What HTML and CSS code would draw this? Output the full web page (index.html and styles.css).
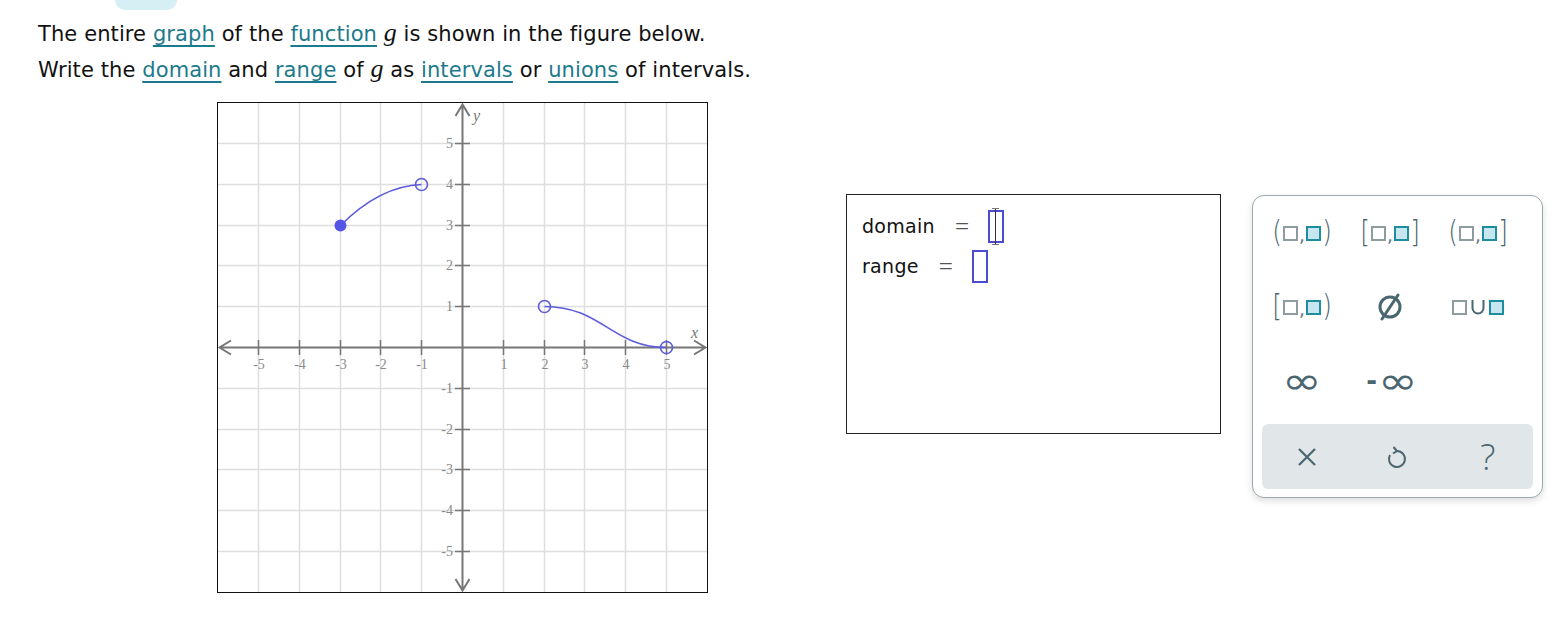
FILE: index.html
```html
<!DOCTYPE html>
<html>
<head>
<meta charset="utf-8">
<title>Domain and range</title>
<link rel="stylesheet" href="styles.css">
</head>
<body>
<div class="tab"></div>
<div class="prompt">
  <p>The entire <a>graph</a> of the <a>function</a> <i class="var">g</i> is shown in the figure below.</p>
  <p>Write the <a>domain</a> and <a>range</a> of <i class="var">g</i> as <a>intervals</a> or <a>unions</a> of intervals.</p>
</div>
<div class="work">
  <div class="graph">
    <svg width="491" height="491" viewBox="0 0 491 491">
      <rect x="0.5" y="0.5" width="490" height="490" fill="#fff" stroke="#111" stroke-width="1"/>
      <path class="grid" d="M41.5 1V490M82.5 1V490M123.5 1V490M163.5 1V490M204.5 1V490M286.5 1V490M327.5 1V490M367.5 1V490M408.5 1V490M449.5 1V490M1 41.5H490M1 82.5H490M1 123.5H490M1 163.5H490M1 204.5H490M1 286.5H490M1 327.5H490M1 367.5H490M1 408.5H490M1 449.5H490"/>
      <path class="axis" d="M2 245.5H489M245.5 2V489M14 238.5L2.5 245.5L14 252.5M477 238.5L488.5 245.5L477 252.5M238.5 14L245.5 2.5L252.5 14M238.5 477L245.5 488.5L252.5 477"/>
      <path class="tick" d="M41.5 238V253M82.5 238V253M123.5 238V253M163.5 238V253M204.5 238V253M286.5 238V253M327.5 238V253M367.5 238V253M408.5 238V253M449.5 238V253M238 41.5H253M238 82.5H253M238 123.5H253M238 163.5H253M238 204.5H253M238 286.5H253M238 327.5H253M238 367.5H253M238 408.5H253M238 449.5H253"/>
      <g class="xl">
        <text x="42" y="267">-5</text><text x="83" y="267">-4</text><text x="124" y="267">-3</text><text x="164" y="267">-2</text><text x="205" y="267">-1</text>
        <text x="287" y="267">1</text><text x="328" y="267">2</text><text x="368" y="267">3</text><text x="409" y="267">4</text><text x="450" y="267">5</text>
      </g>
      <g class="yl">
        <text x="236" y="46">5</text><text x="236" y="87">4</text><text x="236" y="128">3</text><text x="236" y="168">2</text><text x="236" y="209">1</text>
        <text x="236" y="291">-1</text><text x="236" y="332">-2</text><text x="236" y="372">-3</text><text x="236" y="413">-4</text><text x="236" y="454">-5</text>
      </g>
      <text class="al" x="474" y="236">x</text>
      <text class="al" x="256" y="19">y</text>
      <path class="curve" d="M123.5 123.5Q163 84 204.5 82.5"/>
      <path class="curve" d="M327.5 204.5C385 204.5 395 245.5 449.5 245.5"/>
      <circle cx="123.5" cy="123.5" r="6" class="dot"/>
      <circle cx="204.5" cy="82.5" r="6" class="open"/>
      <circle cx="327.5" cy="204.5" r="6" class="open"/>
      <circle cx="449.5" cy="245.5" r="6" class="open"/>
    </svg>
  </div>

  <div class="answer">
    <div class="row"><span class="lbl">domain</span><span class="eq">=</span><span class="slot"><span class="caret"></span></span></div>
    <div class="row"><span class="lbl">range</span><span class="eq">=</span><span class="slot"></span></div>
  </div>

  <div class="keypad">
    <div class="keys">
      <div class="key"><span class="p">(</span><span class="b"></span><span class="c">,</span><span class="b t"></span><span class="p">)</span></div>
      <div class="key"><span class="p">[</span><span class="b"></span><span class="c">,</span><span class="b t"></span><span class="p">]</span></div>
      <div class="key"><span class="p">(</span><span class="b"></span><span class="c">,</span><span class="b t"></span><span class="p">]</span></div>
      <div class="key"><span class="p">[</span><span class="b"></span><span class="c">,</span><span class="b t"></span><span class="p">)</span></div>
      <div class="key">
        <svg width="30" height="32" viewBox="0 0 30 32"><circle cx="15" cy="16" r="10" fill="none" stroke="#4a6670" stroke-width="3"/><path d="M7 28L23 4" stroke="#4a6670" stroke-width="3" stroke-linecap="round"/></svg>
      </div>
      <div class="key"><span class="b sm"></span><svg class="cup" width="16" height="16" viewBox="0 0 16 16"><path d="M2.5 1V9A5.5 5.5 0 0 0 13.5 9V1" fill="none" stroke="#4a6670" stroke-width="2"/></svg><span class="b t sm"></span></div>
      <div class="key"><span class="inf">∞</span></div>
      <div class="key"><span class="minus">-</span><span class="inf">∞</span></div>
    </div>
    <div class="tools">
      <div class="tool">
        <svg width="22" height="22" viewBox="0 0 22 22"><path d="M3 3L19 19M19 3L3 19" stroke="#4a6670" stroke-width="2.2"/></svg>
      </div>
      <div class="tool">
        <svg width="26" height="28" viewBox="0 0 26 28"><path d="M13 8A8 8 0 1 1 6 12" fill="none" stroke="#4a6670" stroke-width="2"/><path d="M9.5 4L13 8L9 10.5" fill="none" stroke="#4a6670" stroke-width="2"/></svg>
      </div>
      <div class="tool"><span class="q">?</span></div>
    </div>
  </div>
</div>
</body>
</html>
```
FILE: styles.css
```css
* { box-sizing: border-box; }
html, body { margin: 0; padding: 0; background: #fff; }
body {
  font-family: "DejaVu Sans", Verdana, sans-serif;
  color: #111;
  width: 1564px;
  height: 642px;
  overflow: hidden;
}
.tab {
  width: 62px;
  height: 10px;
  margin-left: 115px;
  background: #d6eff5;
  border-radius: 0 0 10px 10px;
}
.prompt {
  margin: 6px 0 0 38px;
  font-size: 21px;
  letter-spacing: 0.1px;
}
.prompt p { margin: 0; line-height: 36px; height: 36px; }
.prompt a {
  color: #1d7a8c;
  text-decoration: underline;
  text-underline-offset: 4px;
  text-decoration-thickness: 1.5px;
}
.var {
  font-family: "Liberation Serif", "Times New Roman", serif;
  font-size: 26px;
  line-height: 1;
  letter-spacing: 0;
}
.work {
  display: flex;
  align-items: flex-start;
  margin-top: 14px;
}
.graph { margin-left: 217px; width: 491px; height: 491px; }
.graph svg { display: block; }
.grid { fill: none; stroke: #dedede; stroke-width: 1.5; }
.axis { fill: none; stroke: #777; stroke-width: 2; }
.tick { fill: none; stroke: #777; stroke-width: 1.5; }
.xl text { font-family: "Liberation Serif", serif; font-size: 14px; fill: #8a8a8a; text-anchor: middle; }
.yl text { font-family: "Liberation Serif", serif; font-size: 14px; fill: #8a8a8a; text-anchor: end; }
.al { font-family: "Liberation Serif", serif; font-style: italic; font-size: 16px; fill: #777; }
.curve { fill: none; stroke: #5c5cdc; stroke-width: 1.6; }
.dot { fill: #5656e6; }
.open { fill: none; stroke: #5c5cdc; stroke-width: 1.6; }

.answer {
  margin-left: 138px;
  margin-top: 92px;
  width: 375px;
  height: 240px;
  border: 1px solid #222;
  padding: 11px 0 0 15px;
}
.row {
  display: flex;
  align-items: center;
  height: 40px;
  font-size: 19px;
  letter-spacing: 0.3px;
}
.eq {
  margin: 0 19px 0 20px;
  font-family: "Liberation Serif", serif;
  font-size: 25px;
  color: #555;
  line-height: 1;
}
.slot {
  width: 16px;
  height: 33px;
  border: 2px solid #4c4cd2;
  position: relative;
}
.caret {
  position: absolute;
  left: 5px;
  top: -4px;
  width: 2px;
  height: 37px;
  border-left: 1.5px solid #333;
}
.caret::before, .caret::after {
  content: "";
  position: absolute;
  left: -4px;
  width: 7px;
  height: 0;
  border-top: 1px solid #777;
}
.caret::before { top: 0; }
.caret::after { bottom: 0; }

.keypad {
  margin-left: 31px;
  margin-top: 93px;
  width: 291px;
  height: 303px;
  border: 1px solid #9aa9ae;
  border-radius: 12px;
  box-shadow: 0 3px 7px rgba(0, 0, 0, 0.13);
  background: #fff;
  display: flex;
  flex-direction: column;
}
.keys {
  display: grid;
  grid-template-columns: repeat(3, 1fr);
  grid-auto-rows: 74px;
  padding: 0 20px 0 5px;
  height: 222px;
}
.key {
  display: flex;
  align-items: center;
  justify-content: center;
  color: #4a6670;
}
.p {
  font-family: "DejaVu Sans", sans-serif;
  font-size: 31px;
  font-weight: 300;
  color: #4a6670;
  line-height: 1;
  transform: scaleX(0.8);
  margin-bottom: 3px;
}
.c {
  font-size: 20px;
  color: #6f8388;
  margin: 4px 1px 0 1px;
}
.b {
  display: inline-block;
  width: 15px;
  height: 15px;
  border: 2px solid #8e9ca0;
  margin-top: 1px;
}
.b.t { border-color: #1d8ea0; background: #c8e6ef; }
.b.sm { width: 15px; height: 15px; }
.cup { margin: 0 3px; }
.inf {
  font-family: "DejaVu Sans", sans-serif;
  font-size: 38px;
  line-height: 1;
  color: #4a6670;
  display: inline-block;
  transform: scaleX(1.25);
}
.minus {
  font-family: "DejaVu Sans", sans-serif;
  font-size: 26px;
  font-weight: bold;
  color: #4a6670;
  margin-right: 5px;
}
.tools {
  margin: 6px 9px 0 9px;
  height: 65px;
  background: #e1e7e9;
  border-radius: 6px;
  display: grid;
  grid-template-columns: repeat(3, 1fr);
}
.tool {
  display: flex;
  align-items: center;
  justify-content: center;
}
.q {
  font-family: "Open Sans", sans-serif;
  font-weight: 300;
  font-size: 36px;
  color: #4a6670;
  line-height: 1;
}
```
